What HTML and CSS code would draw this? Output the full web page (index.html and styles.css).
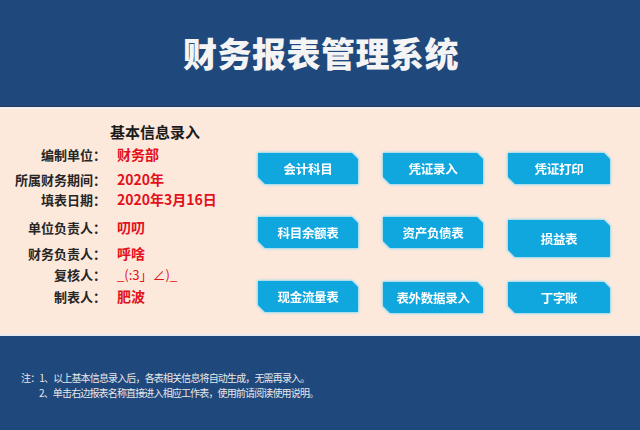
FILE: index.html
```html
<!DOCTYPE html>
<html lang="zh">
<head>
<meta charset="utf-8">
<link rel="stylesheet" href="styles.css">
</head>
<body>
<div class="page">
  <header class="header">
    <h1 class="title">财务报表管理系统</h1>
  </header>
  <div class="sep"></div>
  <main class="main">
    <section class="info">
      <div class="info-title">基本信息录入</div>
      <div class="row r1"><span class="label">编制单位：</span><span class="value">财务部</span></div>
      <div class="row r2"><span class="label">所属财务期间：</span><span class="value">2020年</span></div>
      <div class="row r3"><span class="label">填表日期：</span><span class="value">2020年3月16日</span></div>
      <div class="row r4"><span class="label">单位负责人：</span><span class="value">叨叨</span></div>
      <div class="row r5"><span class="label">财务负责人：</span><span class="value">呼啥</span></div>
      <div class="row r6"><span class="label">复核人：</span><span class="value light">_(:3」∠)_</span></div>
      <div class="row r7"><span class="label">制表人：</span><span class="value">肥波</span></div>
    </section>
    <section class="buttons">
      <div class="btn-wrap"><div class="btn">会计科目</div></div>
      <div class="btn-wrap"><div class="btn">凭证录入</div></div>
      <div class="btn-wrap"><div class="btn">凭证打印</div></div>
      <div class="btn-wrap"><div class="btn">科目余额表</div></div>
      <div class="btn-wrap"><div class="btn">资产负债表</div></div>
      <div class="btn-wrap tall"><div class="btn">损益表</div></div>
      <div class="btn-wrap"><div class="btn">现金流量表</div></div>
      <div class="btn-wrap low"><div class="btn">表外数据录入</div></div>
      <div class="btn-wrap low"><div class="btn">丁字账</div></div>
    </section>
  </main>
  <div class="sep2"></div>
  <footer class="footer">
    <div class="note">注：1、以上基本信息录入后，各表相关信息将自动生成，无需再录入。</div>
    <div class="note second">2、单击右边报表名称直接进入相应工作表，使用前请阅读使用说明。</div>
  </footer>
</div>
</body>
</html>
```
FILE: styles.css
```css
html, body {
  margin: 0;
  padding: 0;
}
body {
  width: 640px;
  height: 430px;
  overflow: hidden;
  font-family: "Noto Sans CJK SC", "Noto Sans", sans-serif;
  background: #fde9dc;
}
.page {
  display: flex;
  flex-direction: column;
  width: 640px;
  height: 430px;
}
.header {
  height: 106px;
  background: #1f497d;
  display: flex;
  align-items: center;
  justify-content: center;
  border-bottom: 1px solid #2b3b57;
}
.title {
  margin: 0;
  padding-left: 2px;
  font-size: 34px;
  line-height: 40px;
  font-weight: 900;
  color: #f4f4f4;
  letter-spacing: 0.5px;
}
.sep {
  height: 2px;
  background: #eef0f3;
}
.main {
  height: 225px;
  background: #fde9dc;
  display: flex;
}
.info {
  width: 258px;
  padding-top: 13px;
  box-sizing: border-box;
}
.info-title {
  padding-left: 110px;
  font-size: 15px;
  line-height: 20px;
  font-weight: 700;
  color: #1a1a1a;
}
.row {
  display: flex;
  align-items: center;
  height: 20px;
}
.r1 { margin-top: 2px; }
.r2 { margin-top: 5px; }
.r3 { margin-top: 0; }
.r4 { margin-top: 8px; }
.r5 { margin-top: 6px; }
.r6 { margin-top: 1px; }
.r7 { margin-top: 2px; }
.label {
  width: 106px;
  text-align: right;
  font-size: 13px;
  font-weight: 700;
  color: #262626;
  white-space: nowrap;
}
.value {
  margin-left: 11px;
  font-size: 14px;
  font-weight: 700;
  color: #e3111b;
  white-space: nowrap;
}
.value.light {
  font-weight: 400;
  font-size: 13px;
}
.buttons {
  margin-top: 44px;
  display: grid;
  grid-template-columns: 100px 100px 102px;
  grid-auto-rows: 32px;
  column-gap: 25px;
  row-gap: 32px;
  align-content: start;
}
.btn-wrap {
  filter: drop-shadow(0 0 1px #6fd2f0) drop-shadow(0 0 1.5px #9fe0f3);
  height: 31px;
}
.btn-wrap.tall {
  margin-top: 3px;
  height: 37px;
}
.btn-wrap.low {
  margin-top: 1px;
}
.btn {
  height: 100%;
  background: #10a6de;
  clip-path: polygon(0 0, calc(100% - 6px) 0, 100% 6px, 100% 100%, 7px 100%, 0 calc(100% - 7px));
  display: flex;
  align-items: center;
  justify-content: center;
  color: #ffffff;
  font-size: 12.5px;
  font-weight: 700;
  letter-spacing: -0.3px;
}
.sep2 {
  height: 2px;
  background: #e6e8ee;
}
.footer {
  flex: 1;
  background: #1f497d;
  padding-top: 34px;
  padding-left: 21px;
  box-sizing: border-box;
}
.note {
  font-size: 10px;
  line-height: 15px;
  letter-spacing: -0.85px;
  color: #e8e8e8;
  white-space: nowrap;
}
.note.second {
  padding-left: 18px;
}
```
